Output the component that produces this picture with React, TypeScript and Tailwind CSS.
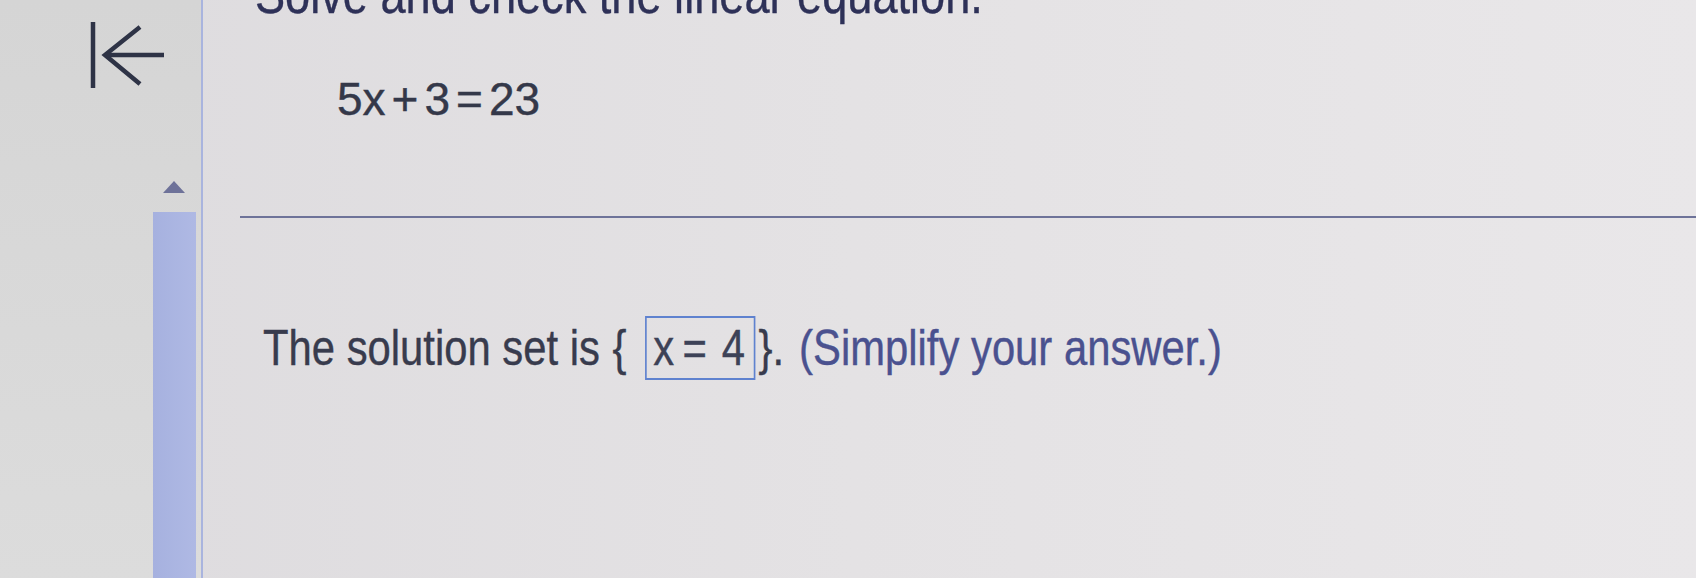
import React from "react";

const sans = "font-['Liberation_Sans',Arial,sans-serif] [-webkit-text-stroke:0.4px_currentColor]";

export default function App() {
  return (
    <div className="w-[1696px] h-[578px] overflow-hidden flex bg-gradient-to-r from-[#dddbde] via-[#e4e2e4] to-[#e9e7e9]">
      {/* Sidebar */}
      <div className="w-[201px] h-full flex shrink-0 bg-gradient-to-b from-[#d5d5d5] to-[#dcdcdc]">
        <div className="w-[150px] shrink-0 pl-[84px] pt-[18px]">
          <svg width="80" height="80" viewBox="0 0 80 80" fill="none" stroke="#2e3346" strokeWidth="4.5" strokeLinecap="butt" className="overflow-visible">
            <line x1="9" y1="4" x2="9" y2="70" />
            <polyline points="56,9 21,37 56,66" strokeLinejoin="miter" />
            <line x1="21" y1="37" x2="80" y2="37" />
          </svg>
        </div>
        <div className="w-[48px] shrink-0 h-full flex flex-col items-center pt-[181px]">
          <div className="w-0 h-0 border-l-[11px] border-r-[11px] border-b-[12px] border-l-transparent border-r-transparent border-b-[#6e7299]" />
          <div className="mt-[19px] w-[43px] flex-1 bg-gradient-to-r from-[#a6b1df] to-[#afb9e4]" />
        </div>
      </div>
      <div className="w-[2px] h-full bg-[#a9b4de] shrink-0" />
      {/* Main */}
      <div className="flex-1 flex flex-col min-w-0">
        <div className={`${sans} text-[54px] leading-none text-[#2e3158] mt-[-33px] ml-[52px] whitespace-nowrap origin-left scale-x-[0.836]`}>
          Solve and check the linear equation.
        </div>
        <div className={`${sans} text-[46px] leading-none text-[#343849] mt-[55px] ml-[134px] whitespace-nowrap flex`}>
          <span>5x</span>
          <span className="ml-[6px]">+</span>
          <span className="ml-[6px]">3</span>
          <span className="ml-[6px]">=</span>
          <span className="ml-[6px]">23</span>
        </div>
        <div className="mt-[94px] ml-[37px] h-[2px] bg-[#6e7399]" />
        <div className={`${sans} text-[50px] leading-none mt-[98px] ml-[60px] flex items-center whitespace-nowrap origin-left scale-x-[0.836]`}>
          <span className="text-[#383b4d]">The solution set is</span>
          <span className="text-[#383b4d] ml-[15px]">{"{"}</span>
          <span className="ml-[22px] w-[132px] h-[64px] border-2 border-[#5f82cf] flex items-center pl-[8px] text-[#3d4257]">
            <span>x</span>
            <span className="ml-[10px]">=</span>
            <span className="ml-[18px]">4</span>
          </span>
          <span className="text-[#383b4d] ml-[4px]">{"}"}</span>
          <span className="text-[#383b4d]">.</span>
          <span className="text-[#4a518f] ml-[18px]">(Simplify your answer.)</span>
        </div>
      </div>
    </div>
  );
}
